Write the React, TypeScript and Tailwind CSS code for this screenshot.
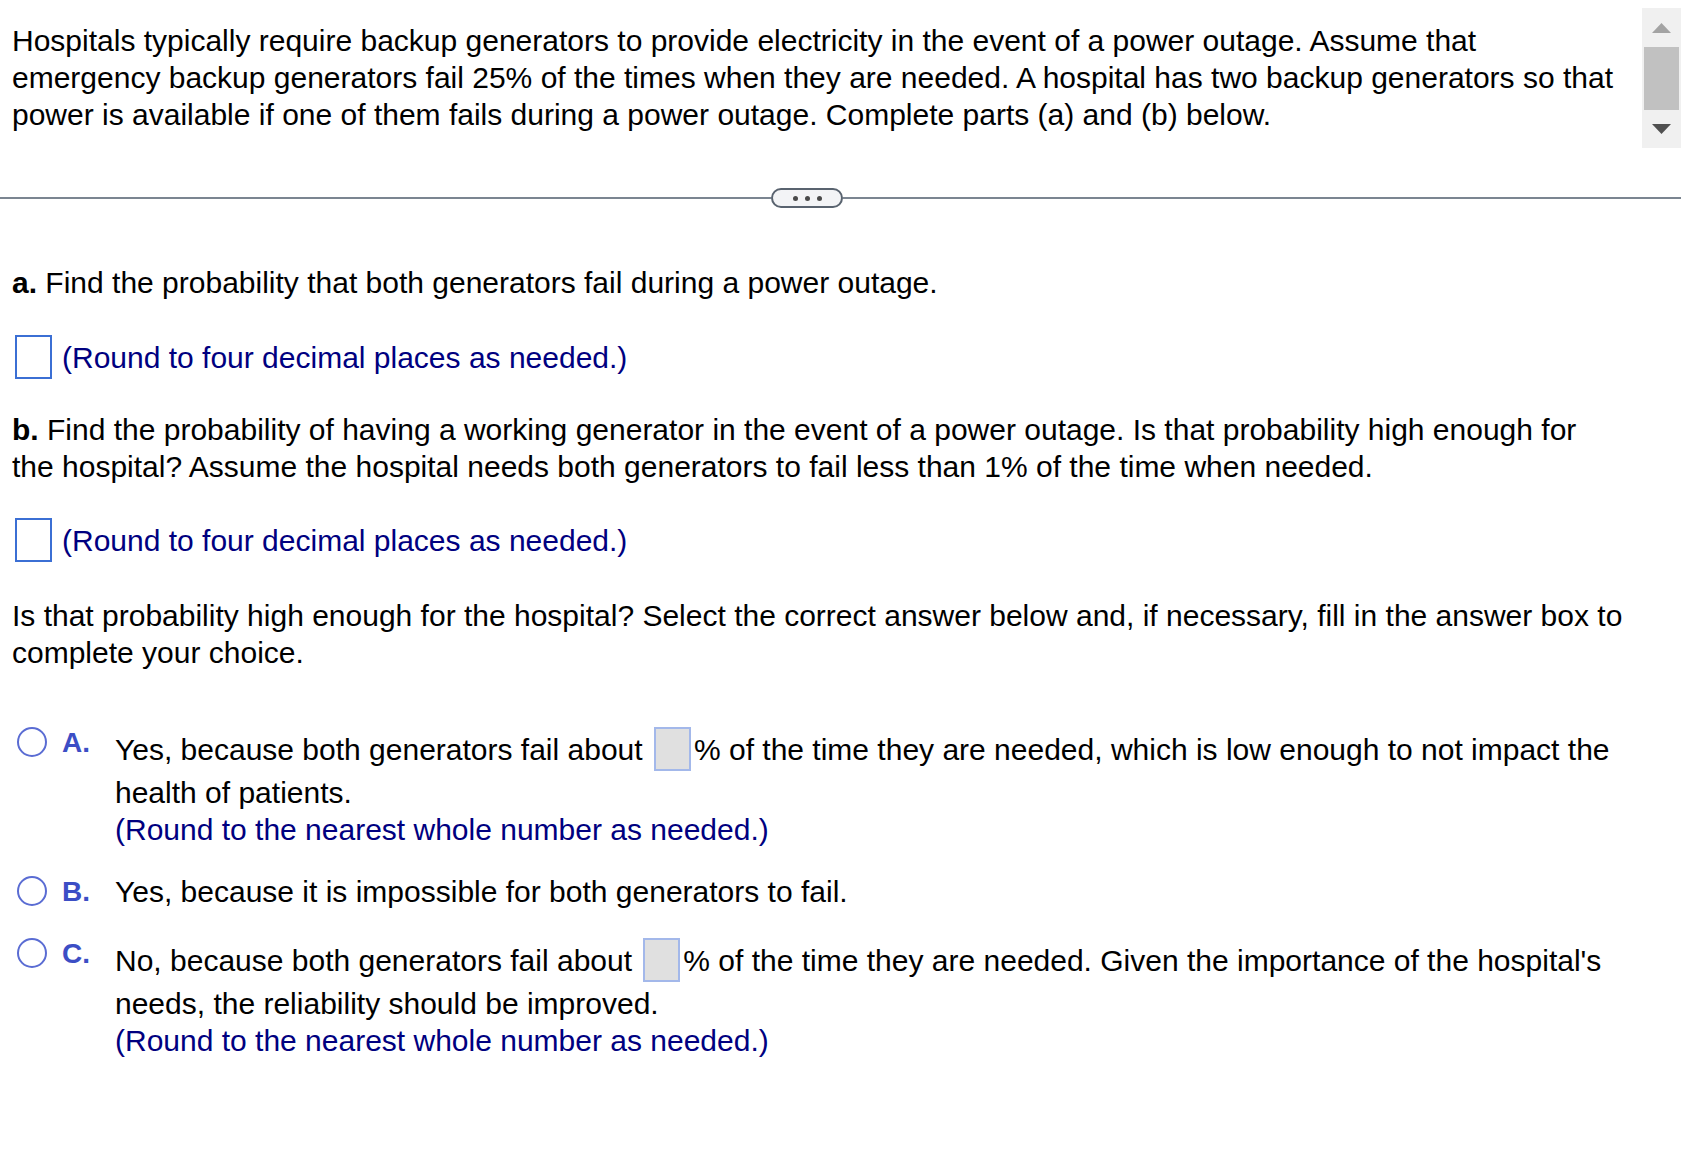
const font = "font-['Liberation_Sans',Arial,sans-serif]";

function AnswerBox() {
  return (
    <span className="inline-block w-[37px] h-[44px] border-2 border-[#3b6fd4] bg-white shrink-0" />
  );
}

function InlineBox() {
  return (
    <span className="inline-block w-[37px] h-[44px] mt-[3px] mb-[3px] mx-[3px] align-[-14px] border-2 border-[#a3b8ea] bg-[#e0e0e0]" />
  );
}

function Radio({ label }: { label: string }) {
  return (
    <>
      <span className="mt-[3px] ml-[5px] w-[30px] h-[30px] rounded-full border-[2.5px] border-[#5a6cd3] bg-white shrink-0" />
      <span className="ml-[15px] w-[53px] text-[28px] leading-[37px] font-bold text-[#3c4ec5] shrink-0">
        {label}
      </span>
    </>
  );
}

function ScrollBar() {
  return (
    <div className="mt-[8px] w-[39px] h-[140px] bg-[#f0f0f0] flex flex-col items-center pt-[15px] shrink-0">
      <svg width="19" height="10" viewBox="0 0 19 10">
        <polygon points="9.5,0 19,10 0,10" fill="#a3a3a3" />
      </svg>
      <div className="mt-[14px] w-[35px] h-[63px] bg-[#c1c1c1]" />
      <svg className="mt-[14px]" width="19" height="10" viewBox="0 0 19 10">
        <polygon points="0,0 19,0 9.5,10" fill="#505050" />
      </svg>
    </div>
  );
}

export default function App() {
  return (
    <div className={`min-h-screen bg-white text-black ${font} text-[30px]`}>
      <div className="w-[1681px]">
        <div className="flex">
          <p className="flex-1 pl-[12px] pt-[22px] leading-[37px] whitespace-nowrap">
            Hospitals typically require backup generators to provide electricity in the event of a power outage. Assume that
            <br />
            emergency backup generators fail 25% of the times when they are needed. A hospital has two backup generators so that
            <br />
            power is available if one of them fails during a power outage. Complete parts (a) and (b) below.
          </p>
          <ScrollBar />
        </div>

        <div className="mt-[40px] flex items-center h-[20px]">
          <div className="w-[771px] h-[2px] bg-[#7b8591]" />
          <div className="w-[72px] h-[20px] rounded-full border-2 border-[#59636f] bg-[#f3f4f6] flex items-center justify-center gap-[7px]">
            <span className="w-[5px] h-[5px] rounded-full bg-[#4a4a4a]" />
            <span className="w-[5px] h-[5px] rounded-full bg-[#4a4a4a]" />
            <span className="w-[5px] h-[5px] rounded-full bg-[#4a4a4a]" />
          </div>
          <div className="flex-1 h-[2px] bg-[#7b8591]" />
        </div>

        <div className="pl-[12px]">
          <p className="mt-[56px] leading-[37px]">
            <span className="font-bold">a.</span> Find the probability that both generators fail during a power outage.
          </p>
          <div className="mt-[34px] ml-[3px] flex items-center gap-[10px]">
            <AnswerBox />
            <span className="text-[#000080] leading-[37px]">(Round to four decimal places as needed.)</span>
          </div>

          <p className="mt-[32px] leading-[37px] whitespace-nowrap">
            <span className="font-bold">b.</span> Find the probability of having a working generator in the event of a power outage. Is that probability high enough for
            <br />
            the hospital? Assume the hospital needs both generators to fail less than 1% of the time when needed.
          </p>
          <div className="mt-[33px] ml-[3px] flex items-center gap-[10px]">
            <AnswerBox />
            <span className="text-[#000080] leading-[37px]">(Round to four decimal places as needed.)</span>
          </div>

          <p className="mt-[35px] leading-[37px] whitespace-nowrap">
            Is that probability high enough for the hospital? Select the correct answer below and, if necessary, fill in the answer box to
            <br />
            complete your choice.
          </p>

          <div className="mt-[53px] flex items-start">
            <Radio label="A." />
            <div className="leading-[37px] whitespace-nowrap">
              <div>
                Yes, because both generators fail about <InlineBox />% of the time they are needed, which is low enough to not impact the
              </div>
              <div>health of patients.</div>
              <div className="text-[#000080]">(Round to the nearest whole number as needed.)</div>
            </div>
          </div>

          <div className="mt-[25px] flex items-start">
            <Radio label="B." />
            <div className="leading-[37px] whitespace-nowrap">
              Yes, because it is impossible for both generators to fail.
            </div>
          </div>

          <div className="mt-[25px] flex items-start">
            <Radio label="C." />
            <div className="leading-[37px] whitespace-nowrap">
              <div>
                No, because both generators fail about <InlineBox />% of the time they are needed. Given the importance of the hospital's
              </div>
              <div>needs, the reliability should be improved.</div>
              <div className="text-[#000080]">(Round to the nearest whole number as needed.)</div>
            </div>
          </div>
        </div>
      </div>
    </div>
  );
}
